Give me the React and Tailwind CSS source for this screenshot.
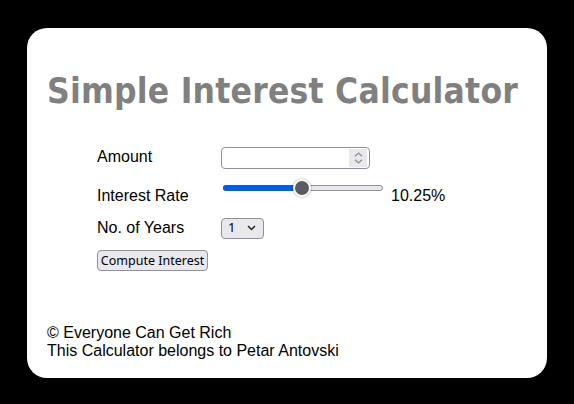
import { useState } from "react";

function Spinner() {
  return (
    <div className="absolute right-[2px] top-[1px] w-[18px] h-[18px] bg-[#e9e9ed] flex flex-col items-center justify-center gap-[2px]">
      <svg width="9" height="5" viewBox="0 0 9 5" fill="none">
        <path d="M1 4.2 L4.5 1 L8 4.2" stroke="#8a8a94" strokeWidth="1.2" />
      </svg>
      <svg width="9" height="5" viewBox="0 0 9 5" fill="none">
        <path d="M1 0.8 L4.5 4 L8 0.8" stroke="#8a8a94" strokeWidth="1.2" />
      </svg>
    </div>
  );
}

export default function App() {
  const [rate] = useState(10.25);
  const pct = 79; // thumb offset along the 160px track

  return (
    <div className="w-[574px] h-[404px] bg-black pt-[28px] pl-[27px]" style={{ fontFamily: '"Liberation Sans", Arial, sans-serif' }}>
      <div className="w-[520px] h-[350px] bg-white rounded-[20px] px-[20px] flex flex-col">
        {/* TITLE */}
        <h1
          className="mt-[43px] h-[40px] leading-[40px] text-[35px] tracking-[0.25px] font-bold text-[#808080] whitespace-nowrap"
          style={{ fontFamily: '"DejaVu Sans Condensed", "DejaVu Sans", Verdana, sans-serif' }}
        >
          Simple Interest Calculator
        </h1>

        {/* FORM */}
        <div className="mt-[35px] pl-[50px] text-[16px] text-black">
          <div className="flex items-center h-[23px]">
            <span className="w-[124px] -mt-[1px]">Amount</span>
            <div className="relative w-[149px] h-[22px] border border-[#8f8f9d] rounded-[4px]">
              <Spinner />
            </div>
          </div>

          <div className="flex items-center h-[22px] mt-[15px]">
            <span className="w-[124px] mt-[1px]">Interest Rate</span>
            <div className="relative w-[164px] h-[16px] mb-[14px] flex items-center px-[2px]">
              <div className="relative w-full h-[6px] rounded-full border border-[#8f8f9d] bg-[#e9e9ed]">
                <div className="absolute left-[-1px] top-[-1px] h-[6px] w-[80px] rounded-full bg-[#0060df]" />
              </div>
              <div
                className="absolute top-[0px] w-[18px] h-[18px] -mt-[1px] rounded-full bg-[#5b5b66] border-2 border-white shadow-[0_0_2px_rgba(0,0,0,0.45)]"
                style={{ left: pct - 9 + 2 }}
              />
            </div>
            <span className="ml-[6px] mt-[1px]">{rate}%</span>
          </div>

          <div className="flex items-center h-[22px] mt-[11px]">
            <span className="w-[124px]">No. of Years</span>
            <div
              className="w-[43px] h-[21px] border border-[#8f8f9d] rounded-[4px] bg-[#e9e9ed] flex items-center justify-between pl-[6px] pr-[7px] text-[13px]"
              style={{ fontFamily: '"Noto Sans", "Open Sans", sans-serif' }}
            >
              <span>1</span>
              <svg width="9" height="6" viewBox="0 0 9 6" fill="none">
                <path d="M1 1 L4.5 4.5 L8 1" stroke="#222" strokeWidth="1.5" />
              </svg>
            </div>
          </div>

          <div className="mt-[9px]">
            <button
              className="w-[111px] h-[21px] border border-[#8f8f9d] rounded-[4px] bg-[#e9e9ed] text-[12.5px] leading-[19px] text-black"
              style={{ fontFamily: '"Noto Sans", "Open Sans", sans-serif' }}
            >
              Compute Interest
            </button>
          </div>
        </div>

        {/* FOOTER */}
        <footer className="mt-auto mb-[18px] text-[16px] leading-[18px] text-black">
          <p>© Everyone Can Get Rich</p>
          <p>This Calculator belongs to Petar Antovski</p>
        </footer>
      </div>
    </div>
  );
}
